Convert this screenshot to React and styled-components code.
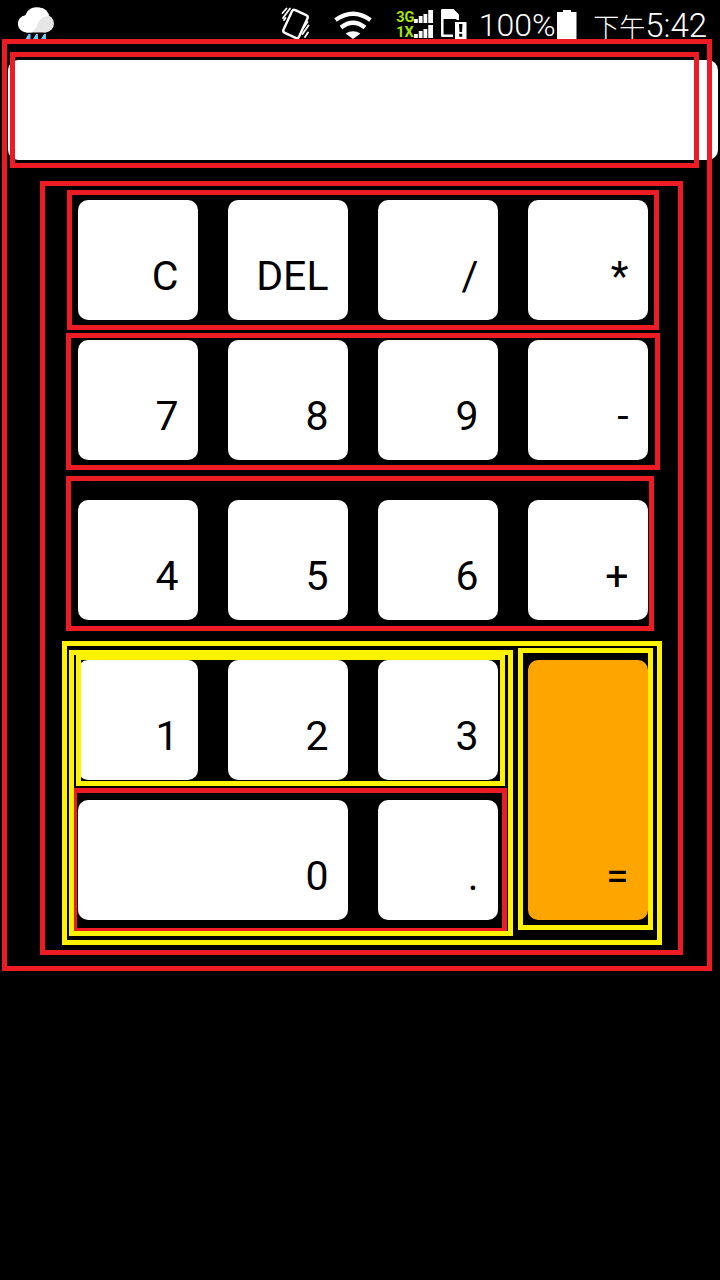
import React from "react";
import styled, { createGlobalStyle } from "styled-components";

const Global = createGlobalStyle`
  html, body { margin: 0; padding: 0; background: #000; }
  #root { width: 720px; }
`;

const Page = styled.div`
  position: relative;
  width: 720px;
  height: 1280px;
  background: #000;
  overflow: hidden;
  font-family: Roboto, "Liberation Sans", sans-serif;
`;

const StatusBar = styled.header`
  display: flex;
  justify-content: space-between;
  height: 39px;
  padding: 0 13px 0 18px;
  color: #fff;
`;

const StatusGroup = styled.div`
  display: flex;
`;

const Icon = styled.svg`
  display: block;
  flex: none;
  margin-left: ${(p) => p.$ml || 0}px;
`;

const Signal = styled.div`
  display: flex;
  flex-direction: column;
  width: 37px;
  margin-left: 24px;
`;

const SignalLine = styled.div`
  display: flex;
  align-items: flex-end;
  height: 15px;
  margin-top: ${(p) => p.$top}px;
`;

const NetLabel = styled.span`
  width: 18px;
  font: 700 14.5px/10px Roboto, sans-serif;
  color: #a6e600;
`;

const Percent = styled.span`
  margin: 12px 0 0 11.5px;
  font: 300 32px/27px Roboto, sans-serif;
`;

const Clock = styled.span`
  margin: 12px 0 0 16px;
  font: 300 33px/27px Roboto, "Noto Sans CJK TC", sans-serif;
  white-space: nowrap;
`;

const ClockCjk = styled.span`
  font-size: 26px;
  line-height: 27px;
  font-family: "Noto Sans CJK TC", sans-serif;
`;

const Display = styled.div`
  width: 710px;
  height: 100px;
  margin: 21px 0 0 8px;
  border-radius: 10px;
  background: #fff;
`;

const Keypad = styled.main`
  display: flex;
  flex-direction: column;
  margin: 40px 0 0 78px;
`;

const Row = styled.div`
  display: flex;
  gap: 30px;
  margin-top: ${(p) => p.$top || 0}px;
`;

const LowerLeft = styled.div`
  display: flex;
  flex-direction: column;
  gap: 20px;
`;

const Key = styled.button`
  display: flex;
  justify-content: flex-end;
  align-items: flex-end;
  box-sizing: border-box;
  width: ${(p) => p.$w || 120}px;
  height: ${(p) => p.$h || 120}px;
  padding: 0 19.5px 20px 0;
  border: 0;
  border-radius: 10px;
  background: ${(p) => p.$bg || "#fff"};
  color: #000;
  font: 400 41px/48px Roboto, sans-serif;
`;

const Frame = styled.div`
  position: absolute;
  box-sizing: border-box;
  left: ${(p) => p.$x}px;
  top: ${(p) => p.$y}px;
  width: ${(p) => p.$r - p.$x}px;
  height: ${(p) => p.$b - p.$y}px;
  border: 5px solid ${(p) => p.$c};
  pointer-events: none;
`;

const RED = "#ed1c24";
const YEL = "#fff200";
const frames = [
  [2, 39, 712, 971, RED],
  [10, 52, 699, 168, RED],
  [40, 181, 683, 955, RED],
  [67, 190, 659, 330, RED],
  [66, 333, 660, 470, RED],
  [66, 476, 654, 631, RED],
  [72, 788, 507, 933, RED],
  [62, 641, 662, 945, YEL],
  [69, 650, 513, 936, YEL],
  [76, 655, 505, 786, YEL],
  [518, 648, 653, 930, YEL],
];

const Cloud = () => (
  <Icon width="36" height="39" viewBox="18 0 36 39">
    <g fill="#e6e6e6">
      <circle cx="45" cy="23.5" r="9" />
      <circle cx="39" cy="18" r="10.5" />
      <rect x="26" y="22" width="20" height="10.5" />
    </g>
    <path
      fill="#fff"
      d="M26.500 32.500a8.700 8.700 0 0 1-1.200-17.300A11 11 0 0 1 38.500 7.500a10.500 10.500 0 0 1 10 8.500c-4 .5-7 1.500-9 4.500-2 3-2.500 6-4.500 8.500-1.500 2-2.500 3.500-4 3.500z"
    />
    <path fill="#6fc6ee" d="M28.500 34h2v5h-5zM36 34h2v5h-5zM44 34h2v5h-5z" />
  </Icon>
);

const Vibrate = () => (
  <Icon width="29" height="39" viewBox="281 0 29 39">
    <rect x="287" y="11.500" width="17" height="25" rx="2.500" fill="none" stroke="#fff" strokeWidth="2.400" transform="rotate(25 295.500 24)" />
    <g stroke="#fff" strokeWidth="1.800" strokeLinecap="round">
      <path d="M282.500 13l4-4.500M283 18l7-9.500M284 20l1.500-2" />
      <path d="M304 27l3.500-5M302.500 34l6-8.500M305 37l3-4.500" />
    </g>
  </Icon>
);

const Wifi = () => (
  <Icon width="38" height="39" viewBox="334 0 38 39" $ml={24}>
    <g fill="none" stroke="#fff" strokeWidth="4.200">
      <path d="M335.500 20Q353 7.500 370.500 20" />
      <path d="M341 27.500Q353 18 365 27.500" />
    </g>
    <path fill="#fff" d="M345.500 33.500Q353 29 360.500 33.500L353 39z" />
  </Icon>
);

const Bars = () => (
  <Icon width="19" height="15" viewBox="0 0 20 15" preserveAspectRatio="none">
    <path fill="#fff" d="M0 11h4v4H0zM5 8h4v7H5zM10 6h4v9h-4zM15 2h5v13h-5z" />
  </Icon>
);

const Sim = () => (
  <Icon width="26" height="39" viewBox="441 0 26 39" $ml={8}>
    <path fill="#fff" d="M443 9h10l5 5v5h-15z" />
    <path fill="none" stroke="#fff" strokeWidth="2.500" strokeLinejoin="round" d="M442.300 10.200h10.500l4.900 4.900v20.700h-15.400z" />
    <rect x="453" y="20" width="14" height="19" fill="#000" />
    <rect x="455" y="22" width="11.500" height="17" fill="#fff" />
    <path fill="#000" d="M459 24h3.500l-.5 8h-2.500zM459.200 33.800h3v3h-3z" />
  </Icon>
);

const Battery = () => (
  <Icon width="20" height="39" viewBox="558 0 20 39" $ml={1.5}>
    <path fill="#fff" d="M564 10h8v2h5.500v27H558V12h6z" />
  </Icon>
);

const Labels = [
  ["C", "DEL", "/", "*"],
  ["7", "8", "9", "-"],
  ["4", "5", "6", "+"],
];
const tops = [0, 20, 40];

export default function App() {
  return (
    <Page>
      <Global />
      <StatusBar>
        <Cloud />
        <StatusGroup>
          <Vibrate />
          <Wifi />
          <Signal>
            <SignalLine $top={8}>
              <NetLabel>3G</NetLabel>
              <Bars />
            </SignalLine>
            <SignalLine $top={0}>
              <NetLabel>1X</NetLabel>
              <Bars />
            </SignalLine>
          </Signal>
          <Sim />
          <Percent>100%</Percent>
          <Battery />
          <Clock>
            <ClockCjk>下午</ClockCjk>5:42
          </Clock>
        </StatusGroup>
      </StatusBar>
      <Display />
      <Keypad>
        {Labels.map((row, i) => (
          <Row key={i} $top={tops[i]}>
            {row.map((l) => (
              <Key key={l}>{l}</Key>
            ))}
          </Row>
        ))}
        <Row $top={40}>
          <LowerLeft>
            <Row>
              <Key>1</Key>
              <Key>2</Key>
              <Key>3</Key>
            </Row>
            <Row>
              <Key $w={270}>0</Key>
              <Key>.</Key>
            </Row>
          </LowerLeft>
          <Key $h={260} $bg="#ffa500">=</Key>
        </Row>
      </Keypad>
      {frames.map(([x, y, r, b, c], i) => (
        <Frame key={i} $x={x} $y={y} $r={r} $b={b} $c={c} />
      ))}
    </Page>
  );
}
